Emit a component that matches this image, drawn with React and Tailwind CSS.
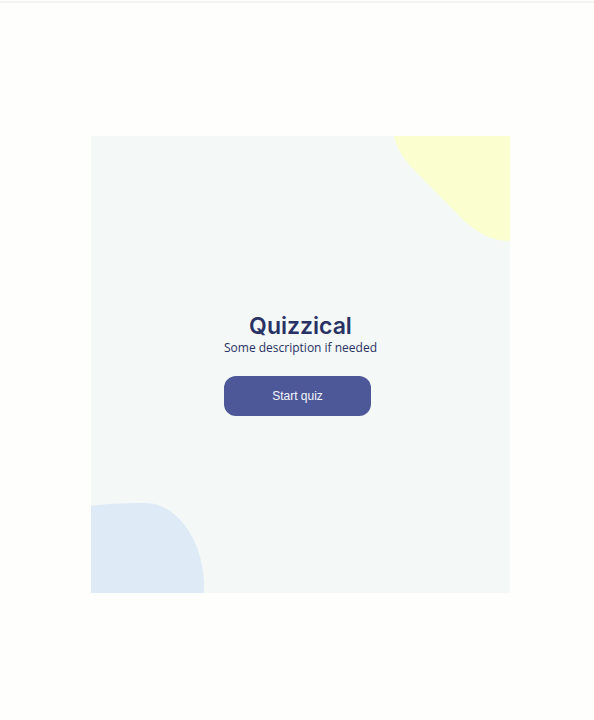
import { useState } from "react";

function YellowBlob() {
  return (
    <svg
      className="absolute top-0 right-0 w-[117px] h-[105px]"
      viewBox="0 0 117 105"
      aria-hidden="true"
    >
      <path
        d="M1 0 H117 V105 C99 105 86 98 69 83 L27 40 C11 24 4 14 1 0 Z"
        fill="#fbffd0"
      />
    </svg>
  );
}

function BlueBlob() {
  return (
    <svg
      className="absolute bottom-0 left-0 w-[113px] h-[90px]"
      viewBox="0 0 113 90"
      aria-hidden="true"
    >
      <path
        d="M0 3 C20 0 40 0 57 0 C90 3 115 43 113 90 H0 Z"
        fill="#deebf6"
      />
    </svg>
  );
}

function Intro({ onStart }) {
  return (
    <div className="flex flex-col text-[#293264]">
      <h1 className="text-center text-[23px] leading-6 font-semibold font-['Inter',sans-serif]">
        Quizzical
      </h1>
      <p className="text-xs leading-5 font-['Open_Sans',sans-serif]">
        Some description if needed
      </p>
      <button
        onClick={onStart}
        className="mt-[18px] h-10 w-[147px] rounded-xl bg-[#4d5899] text-xs text-[#f5f7fb] font-['Liberation_Sans',sans-serif]"
      >
        Start quiz
      </button>
    </div>
  );
}

export default function App() {
  const [started, setStarted] = useState(false);

  return (
    <div className="min-h-screen bg-[#fefffc] pt-px">
      <div className="h-0.5 bg-[#f1f4f3]" />
      <main className="pt-[133px] pr-[84px] pb-32 pl-[91px]">
        <section className="relative flex min-h-[457px] items-center justify-center overflow-hidden bg-[#f4f8f7]">
          <YellowBlob />
          <BlueBlob />
          {!started && <Intro onStart={() => setStarted(true)} />}
        </section>
      </main>
    </div>
  );
}
